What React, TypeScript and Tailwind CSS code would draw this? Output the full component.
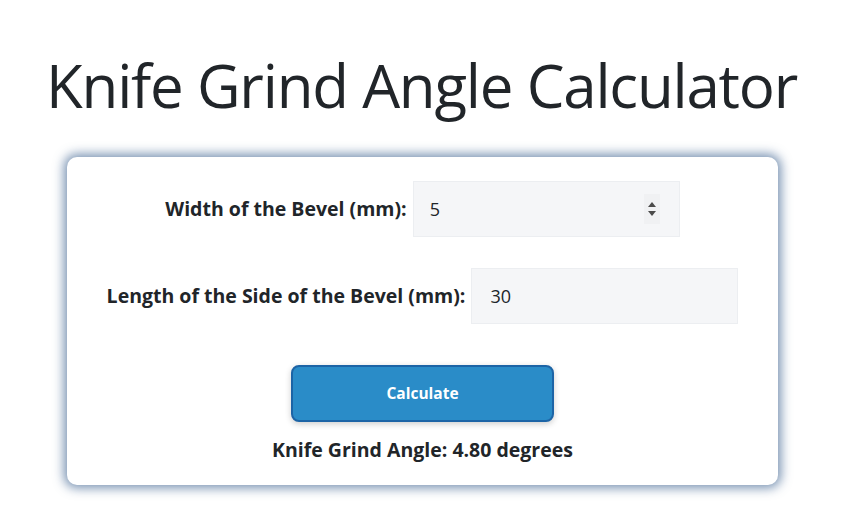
import React, { useState } from 'react';

const App: React.FC = () => {
  const [width, setWidth] = useState('5');
  const [length, setLength] = useState('30');
  const [angle, setAngle] = useState('4.80');

  const calculate = () => {
    const w = parseFloat(width);
    const l = parseFloat(length);
    if (!w || !l) return;
    setAngle(((Math.asin(w / l) * 180) / Math.PI / 2).toFixed(2));
  };

  return (
    <div className="min-h-screen bg-white text-[#212529] font-['Open_Sans','Noto_Sans',sans-serif]">
      {/* Title */}
      <h1 className="text-center text-[60px] font-normal leading-none pt-[55px] tracking-[-1.2px]">
        Knife Grind Angle Calculator
      </h1>

      {/* Card */}
      <div className="mx-[67px] mt-[42px] w-[711px] rounded-[10px] bg-white pt-6 pb-[21px] shadow-[0_0_11px_3px_rgba(85,118,158,0.8)] flex flex-col items-center">
        <div className="flex items-center gap-[6px]">
          <label className="text-[19.5px] font-bold">Width of the Bevel (mm):</label>
          <div className="relative">
            <input
              type="text"
              value={width}
              onChange={(e) => setWidth(e.target.value)}
              className="w-[267px] h-[56px] bg-[#f5f6f8] border border-[#eceef1] px-4 text-[18px] outline-none"
            />
            <div className="absolute right-[20px] top-[13px] w-[16px] h-[30px] bg-[#f0f1f3] flex flex-col items-center justify-center gap-[4px]">
              <svg width="8" height="5" viewBox="0 0 8 5"><path d="M4 0 L8 5 L0 5 Z" fill="#4a4a4a" /></svg>
              <svg width="8" height="5" viewBox="0 0 8 5"><path d="M0 0 L8 0 L4 5 Z" fill="#4a4a4a" /></svg>
            </div>
          </div>
        </div>

        <div className="flex items-center gap-[6px] mt-[31px]">
          <label className="text-[19.5px] font-bold">Length of the Side of the Bevel (mm):</label>
          <input
            type="text"
            value={length}
            onChange={(e) => setLength(e.target.value)}
            className="w-[267px] h-[56px] bg-[#f5f6f8] border border-[#eceef1] px-[18px] text-[18px] outline-none"
          />
        </div>

        <button
          onClick={calculate}
          className="mt-[41px] w-[263px] h-[57px] rounded-[8px] bg-[#2a8cc8] border-2 border-[#1c64a6] text-white text-[15.5px] font-bold shadow-[0_2px_6px_rgba(0,0,0,0.2)]"
        >
          Calculate
        </button>

        <p className="mt-[13px] text-[19.5px] font-bold">Knife Grind Angle: {angle} degrees</p>
      </div>
    </div>
  );
};

export default App;
